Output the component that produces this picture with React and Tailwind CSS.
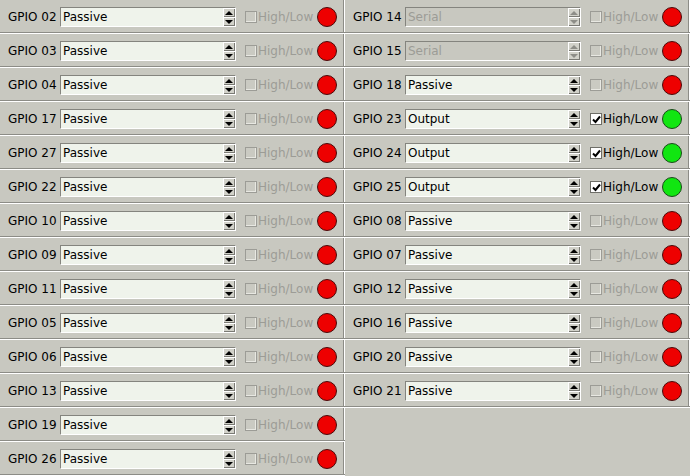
import React from "react";

// Pin table: [pin, mode]
const LEFT = [
  ["02", "Passive"], ["03", "Passive"], ["04", "Passive"], ["17", "Passive"],
  ["27", "Passive"], ["22", "Passive"], ["10", "Passive"], ["09", "Passive"],
  ["11", "Passive"], ["05", "Passive"], ["06", "Passive"], ["13", "Passive"],
  ["19", "Passive"], ["26", "Passive"],
];

const RIGHT = [
  ["14", "Serial"], ["15", "Serial"], ["18", "Passive"], ["23", "Output"],
  ["24", "Output"], ["25", "Output"], ["08", "Passive"], ["07", "Passive"],
  ["12", "Passive"], ["16", "Passive"], ["20", "Passive"], ["21", "Passive"],
];

function Spinner({ disabled }) {
  const arrow = disabled ? "#8e8e88" : "#000";
  return (
    <div className="flex flex-col w-[12px] h-[18px]">
      <div className="flex-1 flex items-center justify-center bg-[#d2d2ca] shadow-[inset_1px_1px_0_#fff,inset_-1px_-1px_0_#7a7a74]">
        <div className="w-0 h-0 border-x-[4px] border-x-transparent border-b-[4px]" style={{ borderBottomColor: arrow }} />
      </div>
      <div className="flex-1 flex items-center justify-center bg-[#d2d2ca] shadow-[inset_1px_1px_0_#fff,inset_-1px_-1px_0_#7a7a74]">
        <div className="w-0 h-0 border-x-[4px] border-x-transparent border-t-[4px]" style={{ borderTopColor: arrow }} />
      </div>
    </div>
  );
}

function PinRow({ pin, mode }) {
  const disabled = mode === "Serial";
  const output = mode === "Output";
  return (
    <div className="h-[34px] flex items-center pl-[8px] shadow-[inset_0_-1px_0_#fff,inset_0_-2px_0_#8c8c86,inset_-1px_0_0_#fff,inset_-2px_0_0_#8c8c86]">
      <span className="w-[52px] text-black">GPIO {pin}</span>

      {/* mode combo box */}
      <div
        className={
          "w-[176px] h-[20px] flex items-center justify-between pl-[2px] pr-0 border border-t-[#84847e] border-l-[#84847e] border-b-white border-r-white " +
          (disabled ? "bg-[#c8c8c0] text-[#9c9c96]" : "bg-[#eff3eb] text-black")
        }
      >
        <span>{mode}</span>
        <Spinner disabled={disabled} />
      </div>

      {/* high/low checkbox */}
      <div className="ml-[9px] flex items-center">
        <div
          className={
            "w-[12px] h-[12px] border flex items-center justify-center " +
            (output ? "bg-white border-[#6e6e68]" : "bg-[#cacac2] border-[#9c9c96] shadow-[inset_-1px_-1px_0_#e8e8e2]")
          }
        >
          {output && (
            <svg width="9" height="9" viewBox="0 0 9 9">
              <path d="M1 4.5 L3.5 7 L8 1.5" stroke="#000" strokeWidth="2" fill="none" />
            </svg>
          )}
        </div>
        <span className={"ml-[1px] " + (output ? "text-black" : "text-[#9c9c96]")}>High/Low</span>
      </div>

      {/* state lamp */}
      <div
        className={
          "ml-[4px] w-[20px] h-[20px] rounded-full border " +
          (output ? "bg-[#11e611] border-[#1a4a1a]" : "bg-[#ee0000] border-[#4a0a0a]")
        }
      />
    </div>
  );
}

export default function App() {
  return (
    <div
      className="w-[690px] h-[476px] bg-[#c8c8c0] flex overflow-hidden text-[12px] leading-none"
      style={{ fontFamily: '"DejaVu Sans", sans-serif' }}
    >
      <div className="w-[345px] flex flex-col">
        {LEFT.map(([pin, mode]) => (
          <PinRow key={pin} pin={pin} mode={mode} />
        ))}
      </div>
      <div className="w-[345px] flex flex-col">
        {RIGHT.map(([pin, mode]) => (
          <PinRow key={pin} pin={pin} mode={mode} />
        ))}
      </div>
    </div>
  );
}
